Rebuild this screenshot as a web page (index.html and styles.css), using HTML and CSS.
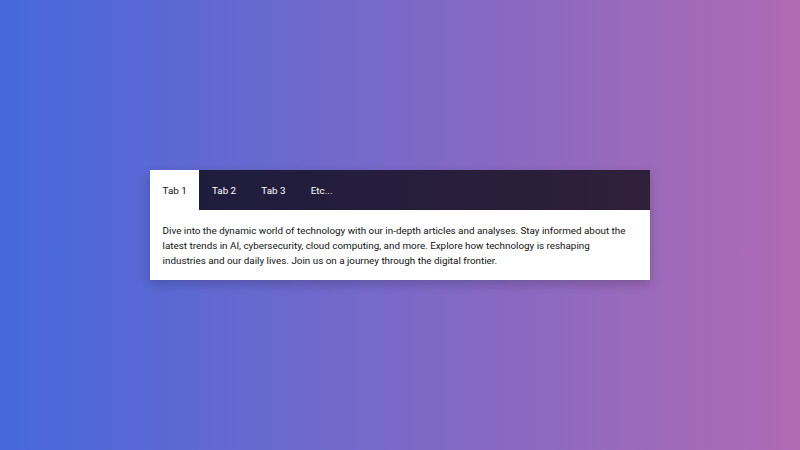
FILE: index.html
```html
<!DOCTYPE html>
<html lang="en">
<head>
    <meta charset="UTF-8">
    <meta name="viewport" content="width=device-width, initial-scale=1.0">
    <title>Tabs</title>
    <link rel="stylesheet" href="styles.css">
</head>
<body>
    <div class="tabs">
        <div class="tab-list">
            <button class="tab active">Tab 1</button>
            <button class="tab">Tab 2</button>
            <button class="tab">Tab 3</button>
            <button class="tab">Etc...</button>
        </div>
        <div class="tab-panel">
            <p>Dive into the dynamic world of technology with our in-depth articles and analyses. Stay informed about the latest trends in AI, cybersecurity, cloud computing, and more. Explore how technology is reshaping industries and our daily lives. Join us on a journey through the digital frontier.</p>
        </div>
    </div>
</body>
</html>
```

FILE: styles.css
```css
html, body {
    height: 100%;
}

body {
    margin: 0;
    font-family: Roboto, "Liberation Sans", sans-serif;
    font-size: 9.85px;
    background: linear-gradient(to right, #4568dc, #b06ab3);
    display: flex;
    align-items: center;
    justify-content: center;
}

.tabs {
    width: 500px;
    background-color: #fff;
    box-shadow: 0 4px 10px rgba(0, 0, 0, 0.2);
}

.tab-list {
    display: flex;
    height: 40px;
    background: linear-gradient(to right, #1d1c3d, #2f1f3a);
}

.tab {
    background: none;
    border: none;
    color: #fff;
    font-family: inherit;
    font-size: inherit;
    padding: 0 12.6px;
    cursor: pointer;
}

.tab.active {
    background-color: #fff;
    color: #111;
}

.tab-panel {
    padding: 12.5px 20px 12.5px 12.6px;
}

.tab-panel p {
    margin: 0;
    line-height: 15px;
    color: #111;
}
```
